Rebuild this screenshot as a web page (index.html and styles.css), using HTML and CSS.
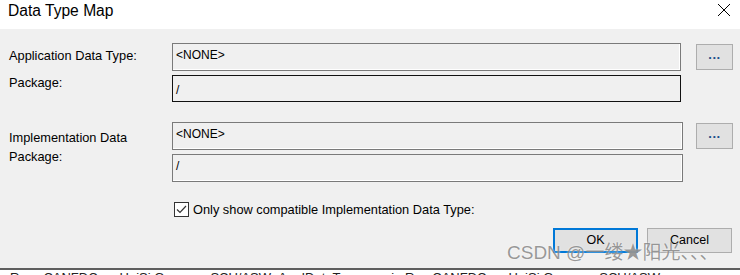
FILE: index.html
```html
<!DOCTYPE html>
<html lang="en">
<head>
    <meta charset="UTF-8">
    <title>Data Type Map</title>
    <link rel="stylesheet" href="styles.css">
</head>
<body>
    <div class="dialog">
        <div class="titlebar">
            <div class="title">Data Type Map</div>
            <svg class="close" width="14" height="14" viewBox="0 0 14 14">
                <path d="M1 1 L13 13 M13 1 L1 13" stroke="#000" stroke-width="1" fill="none"/>
            </svg>
        </div>

        <div class="content">
            <div class="row row-app">
                <div class="label app">Application Data Type:</div>
                <div class="field">&lt;NONE&gt;</div>
                <div class="browse">...</div>
            </div>
            <div class="row row-pkg">
                <div class="label pkg">Package:</div>
                <div class="field focus">/</div>
            </div>
            <div class="row row-impl">
                <div class="label impl">Implementation Data</div>
                <div class="field wide">&lt;NONE&gt;</div>
                <div class="browse">...</div>
            </div>
            <div class="row row-pkg">
                <div class="label pkg2">Package:</div>
                <div class="field wide">/</div>
            </div>

            <div class="check-row">
                <div class="checkbox">
                    <svg width="13" height="13" viewBox="0 0 13 13">
                        <path d="M2 6.5 L5 9.5 L11 3" stroke="#333" stroke-width="1.2" fill="none"/>
                    </svg>
                </div>
                <div class="check-text">Only show compatible Implementation Data Type:</div>
            </div>

            <div class="actions">
                <div class="btn default">OK</div>
                <div class="btn">Cancel</div>
            </div>
        </div>

        <div class="behind">
            <span class="w1">R</span>
            <span class="w2">CANFDC</span>
            <span class="w3">HuiSi Group</span>
            <span class="w4">SCU/ASW_AppIDataTypes</span>
            <span class="w5">in R</span>
            <span class="w6">CANFDC</span>
            <span class="w7">HuiSi Group</span>
            <span class="w8">SCU/ASW</span>
        </div>

        <div class="watermark">CSDN @一缕★阳光、、、</div>
    </div>
</body>
</html>
```

FILE: styles.css
```css
:root {
    --face: #f0f0f0;
    --btn-face: #e1e1e1;
    --btn-border: #adadad;
    --ui-font: 'Liberation Sans', Arial, 'Noto Sans CJK SC', sans-serif;
}

body {
    margin: 0;
    width: 740px;
    height: 275px;
    overflow: hidden;
    font-family: var(--ui-font);
    color: #000;
    background: #fff;
}

.dialog {
    position: relative;
    width: 740px;
    height: 275px;
    display: flex;
    flex-direction: column;
}

.titlebar {
    height: 29px;
    background: #fff;
    display: flex;
    align-items: flex-start;
    justify-content: space-between;
}

.title {
    font-size: 15.6px;
    line-height: 18px;
    padding: 2px 0 0 8px;
}

.close {
    margin: 3px 9px 0 0;
}

.content {
    background: var(--face);
    height: 239px;
    padding-left: 9px;
}

.row {
    display: flex;
    align-items: flex-start;
    height: 28px;
}

.row-app {
    margin-top: 14px;
}

.row-pkg {
    margin-top: 4px;
}

.row-impl {
    margin-top: 19px;
}

.label {
    width: 163px;
    flex-shrink: 0;
    font-size: 12.8px;
    line-height: 15px;
}

.label.app { margin-top: 4.5px; }
.label.pkg { margin-top: -0.5px; }
.label.impl { margin-top: 7.5px; }
.label.pkg2 { margin-top: -5.5px; }

.field {
    box-sizing: border-box;
    width: 509px;
    height: 28px;
    border: 1px solid #7a7a7a;
    box-shadow: inset -1px -1px 0 #fff;
    font-size: 12px;
    line-height: 14px;
    padding: 4px 0 0 3px;
    background: var(--face);
}

.field.focus {
    height: 27px;
    border-color: #111;
    box-shadow: none;
    padding-top: 7px;
}

.field.wide {
    width: 511px;
}

.browse {
    box-sizing: border-box;
    width: 37px;
    height: 26px;
    margin: 1px 0 0 auto;
    margin-right: 7px;
    background: var(--btn-face);
    border: 1px solid var(--btn-border);
    text-align: center;
    font-size: 13px;
    line-height: 20px;
    color: #1d4f8a;
    font-weight: bold;
    letter-spacing: 0.5px;
}

.check-row {
    display: flex;
    align-items: center;
    margin: 20px 0 0 165px;
    height: 15px;
}

.checkbox {
    box-sizing: border-box;
    width: 15px;
    height: 15px;
    border: 1px solid #333;
    background: #fff;
    display: flex;
    align-items: center;
    justify-content: center;
}

.check-text {
    font-size: 12.8px;
    line-height: 15px;
    margin-left: 4px;
}

.actions {
    display: flex;
    justify-content: flex-end;
    gap: 9px;
    margin-top: 11px;
    padding-right: 8px;
}

.btn {
    box-sizing: border-box;
    width: 85px;
    height: 25px;
    background: var(--btn-face);
    border: 1px solid var(--btn-border);
    text-align: center;
    font-size: 12.5px;
    line-height: 23px;
}

.btn.default {
    border: 2px solid #0078d7;
    line-height: 21px;
}

.behind {
    flex: 1;
    border-top: 2px solid #5e5e5e;
    background: #fff;
    overflow: hidden;
    display: flex;
    font-size: 13px;
    line-height: 13px;
    white-space: nowrap;
    padding-top: 1px;
    color: #222;
}

.behind span {
    flex-shrink: 0;
}

.w1 { margin-left: 10px; }
.w2 { margin-left: 24px; }
.w3 { margin-left: 22px; }
.w4 { margin-left: 20px; }
.w5 { margin-left: 24px; }
.w6 { margin-left: 18px; }
.w7 { margin-left: 22px; }
.w8 { margin-left: 20px; }

/* 水印 */
.watermark {
    position: absolute;
    left: 507px;
    top: 242px;
    font-family: 'Liberation Sans', 'Noto Sans CJK SC', sans-serif;
    font-size: 19px;
    line-height: 22px;
    color: rgba(120,120,120,0.75);
    text-shadow: 0 0 2px rgba(255,255,255,0.8);
    white-space: nowrap;
}
```
